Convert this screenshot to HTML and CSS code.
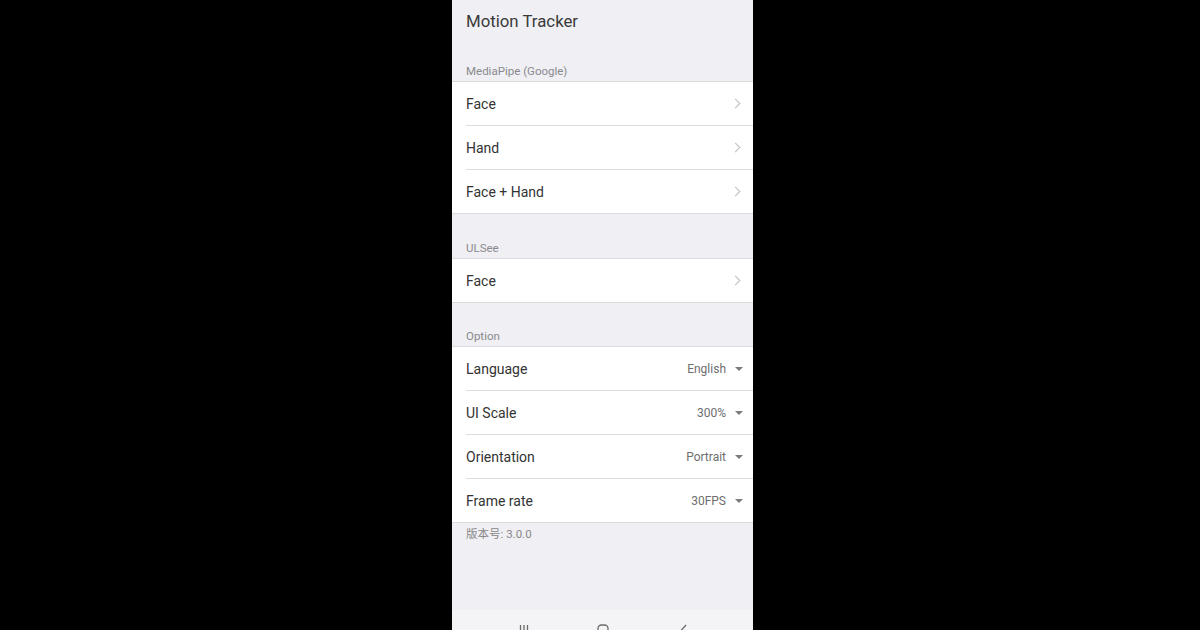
FILE: index.html
```html
<!DOCTYPE html>
<html>
<head>
<meta charset="utf-8">
<link rel="stylesheet" href="styles.css">
</head>
<body>
<div class="stage">
  <div class="phone">
    <div class="content">
      <header class="titlebar"><h1 class="title">Motion Tracker</h1></header>

      <div class="section-label">MediaPipe (Google)</div>
      <ul class="group">
        <li class="row"><span class="row-label">Face</span><span class="chev"></span></li>
        <li class="row"><span class="row-label">Hand</span><span class="chev"></span></li>
        <li class="row"><span class="row-label">Face + Hand</span><span class="chev"></span></li>
      </ul>

      <div class="section-label">ULSee</div>
      <ul class="group">
        <li class="row"><span class="row-label">Face</span><span class="chev"></span></li>
      </ul>

      <div class="section-label section-label-tight">Option</div>
      <ul class="group">
        <li class="row"><span class="row-label">Language</span><span class="value">English</span><span class="caret"></span></li>
        <li class="row"><span class="row-label">UI Scale</span><span class="value">300%</span><span class="caret"></span></li>
        <li class="row"><span class="row-label">Orientation</span><span class="value">Portrait</span><span class="caret"></span></li>
        <li class="row"><span class="row-label">Frame rate</span><span class="value">30FPS</span><span class="caret"></span></li>
      </ul>

      <div class="version">版本号: 3.0.0</div>
    </div>
    <nav class="navbar">
      <svg class="nav-icon" width="10" height="12" viewBox="0 0 10 12"><path d="M1.5 1v10M5 1v10M8.5 1v10" stroke="#6b6b6b" stroke-width="1.3" fill="none"/></svg>
      <svg class="nav-icon" width="12" height="12" viewBox="0 0 12 12"><rect x="1" y="1" width="10" height="11" rx="3.5" stroke="#6b6b6b" stroke-width="1.3" fill="none"/></svg>
      <svg class="nav-icon" width="10" height="12" viewBox="0 0 10 12"><path d="M7 1L2.5 6L7 11" stroke="#6b6b6b" stroke-width="1.3" fill="none"/></svg>
    </nav>
  </div>
</div>
</body>
</html>
```

FILE: styles.css
```css
html, body {
  margin: 0;
  padding: 0;
  background: #000;
  height: 630px;
  overflow: hidden;
}
.stage {
  display: flex;
  justify-content: center;
  padding-left: 5px;
  height: 630px;
}
.phone {
  width: 301px;
  height: 630px;
  background: #efeff4;
  display: flex;
  flex-direction: column;
  font-family: Roboto, "Noto Sans CJK SC", sans-serif;
  color: #333;
  overflow: hidden;
}
.content {
  flex: 1;
}
.titlebar {
  height: 37px;
  padding: 9px 0 0 14px;
  box-sizing: border-box;
}
.title {
  margin: 0;
  font-size: 16.8px;
  font-weight: 400;
  line-height: 24px;
  color: #3a3a3a;
}
.section-label {
  height: 44px;
  box-sizing: border-box;
  padding: 27px 0 0 14px;
  font-size: 11.5px;
  line-height: 14px;
  color: #8a8a8e;
}
.section-label-tight {
  height: 43px;
  padding-top: 26px;
}
.group {
  list-style: none;
  margin: 0;
  padding: 0 0 0 14px;
  background: #fff;
  border-top: 1px solid #dcdcdf;
  border-bottom: 1px solid #dcdcdf;
}
.row {
  height: 43px;
  display: flex;
  align-items: center;
  padding-right: 10px;
  border-bottom: 1px solid #dcdcdf;
}
.row:last-child {
  border-bottom: 0;
}
.row-label {
  flex: 1;
  font-size: 14px;
  color: #333;
}
.value {
  font-size: 12px;
  color: #6e6e6e;
  margin-right: 9px;
}
.caret {
  width: 0;
  height: 0;
  border-left: 4px solid transparent;
  border-right: 4px solid transparent;
  border-top: 4px solid #7a7a7a;
}
.chev {
  width: 6px;
  height: 6px;
  border-top: 1.5px solid #bdbdc2;
  border-right: 1.5px solid #bdbdc2;
  transform: rotate(45deg);
  margin-right: 4px;
}
.version {
  padding: 3px 0 0 14px;
  font-size: 11.5px;
  line-height: 16px;
  color: #888;
}
.navbar {
  height: 20px;
  background: #f4f4f6;
  display: flex;
  align-items: flex-start;
  padding: 14px 0 0 0;
  box-sizing: border-box;
}
.nav-icon:nth-child(1) { margin-left: 67px; }
.nav-icon:nth-child(2) { margin-left: 68px; }
.nav-icon:nth-child(3) { margin-left: 70px; }
```
